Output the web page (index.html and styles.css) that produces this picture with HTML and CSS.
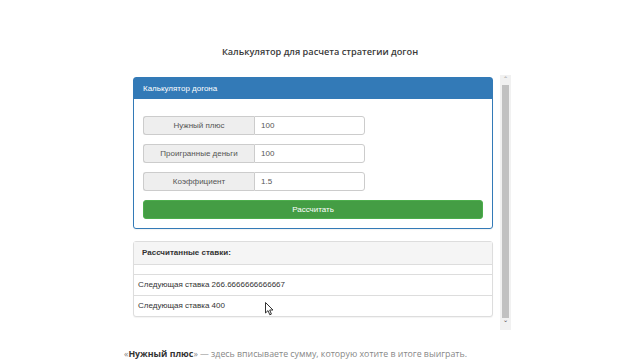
FILE: index.html
```html
<!DOCTYPE html>
<html lang="ru">
  <head>
    <meta charset="UTF-8">
    <meta name="viewport" content="width=device-width, initial-scale=1.0">
    <title>Калькулятор догона</title>
    <link rel="stylesheet" href="styles.css">
  </head>
  <body>
    <h2 class="page-title">Калькулятор для расчета стратегии догон</h2>

    <div class="frame">
      <div class="frame-content">
        <div class="panel panel-primary">
          <div class="panel-heading">Калькулятор догона</div>
          <div class="panel-body">
            <div class="input-group">
              <span class="addon">Нужный плюс</span>
              <input type="text" class="field" value="100">
            </div>
            <div class="input-group">
              <span class="addon">Проигранные деньги</span>
              <input type="text" class="field" value="100">
            </div>
            <div class="input-group">
              <span class="addon">Коэффициент</span>
              <input type="text" class="field" value="1.5">
            </div>
            <button type="button" class="btn-success">Рассчитать</button>
          </div>
        </div>

        <div class="panel panel-default">
          <div class="panel-heading">Рассчитанные ставки:</div>
          <ul class="list-group">
            <li class="list-item list-item-empty"></li>
            <li class="list-item">Следующая ставка 266.6666666666667</li>
            <li class="list-item">Следующая ставка 400</li>
          </ul>
          <!-- mouse pointer caught in the screenshot -->
          <svg class="cursor" width="9" height="14" viewBox="0 0 9 14">
            <path d="M0.5 0.5 L0.5 11 L3 8.6 L4.8 12.8 L6.4 12.1 L4.7 8 L8 8 Z" fill="#fff" stroke="#333" stroke-width="1" stroke-linejoin="round"/>
          </svg>
        </div>
      </div>

      <div class="scrollbar">
        <span class="arrow">&#710;</span>
        <div class="thumb"></div>
        <span class="arrow arrow-down">&#711;</span>
      </div>
    </div>

    <p class="note">
      «<b>Нужный плюс</b>» — здесь вписываете сумму, которую хотите в итоге выиграть.
    </p>
  </body>
</html>
```

FILE: styles.css
```css
body {
  margin: 0;
  background-color: #fff;
  font-family: "Open Sans", sans-serif;
  color: #333;
}

.page-title {
  margin: 45px 0 0;
  text-align: center;
  font-size: 9.2px;
  font-weight: 600;
  line-height: 14px;
  color: #3a3a3a;
}

.frame {
  display: flex;
  gap: 7px;
  width: 378px;
  margin: 16px 0 0 133px;
  height: 255px;
}

.frame-content {
  width: 360px;
  padding-top: 2px;
  font-family: "Liberation Sans", Arial, sans-serif;
  font-size: 8px;
}

.panel {
  position: relative;
  border: 1px solid #ddd;
  border-radius: 3px;
  background-color: #fff;
  box-shadow: 0 1px 1px rgba(0, 0, 0, 0.05);
}

.panel-primary {
  border-color: #337ab7;
}

.panel-primary .panel-heading {
  background-color: #337ab7;
  color: #fff;
  height: 21px;
  line-height: 21px;
  padding: 0 9px;
}

.panel-body {
  padding: 17px 9px 9px;
}

.input-group {
  display: flex;
  width: 222px;
  height: 19px;
  margin-bottom: 9px;
}

.addon {
  width: 110px;
  border: 1px solid #ccc;
  border-right: none;
  border-radius: 3px 0 0 3px;
  background-color: #eee;
  color: #555;
  text-align: center;
  line-height: 17px;
}

.field {
  width: 111px;
  box-sizing: border-box;
  border: 1px solid #ccc;
  border-radius: 0 3px 3px 0;
  padding: 0 6px;
  font-family: "Liberation Sans", Arial, sans-serif;
  font-size: 8px;
  color: #555;
}

.btn-success {
  display: block;
  width: 340px;
  height: 19px;
  border: 1px solid #4cae4c;
  border-radius: 3px;
  background-color: #449d44;
  color: #fff;
  font-family: "Liberation Sans", Arial, sans-serif;
  font-size: 8px;
  padding: 0;
}

.panel-default {
  margin-top: 12px;
}

.panel-default .panel-heading {
  background-color: #f5f5f5;
  border-bottom: 1px solid #ddd;
  height: 22px;
  line-height: 22px;
  padding: 0 8px;
  font-weight: bold;
  color: #333;
}

.list-group {
  list-style: none;
  margin: 0;
  padding: 0;
}

.list-item {
  height: 20px;
  line-height: 20px;
  padding: 0 4px;
  border-top: 1px solid #ddd;
  color: #333;
}

.list-item:first-child {
  border-top: none;
}

.list-item-empty {
  height: 9px;
}

.cursor {
  position: absolute;
  left: 131px;
  top: 60px;
}

.scrollbar {
  width: 11px;
  display: flex;
  flex-direction: column;
  align-items: center;
  background-color: #f1f1f1;
}

.arrow {
  height: 10px;
  line-height: 12px;
  font-size: 9px;
  color: #a3a3a3;
}

.arrow-down {
  line-height: 10px;
  color: #505050;
}

.thumb {
  flex: 1;
  width: 7px;
  background-color: #c1c1c1;
  margin: 0 0 2px;
}

.note {
  margin: 17px 0 0 124px;
  font-size: 8.8px;
  line-height: 14px;
  color: #888;
}

.note b {
  color: #333;
  font-weight: 700;
}
```
